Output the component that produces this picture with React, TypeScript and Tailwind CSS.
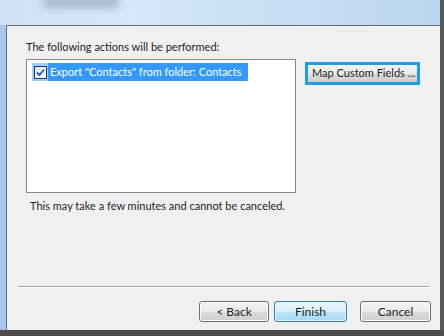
import React from "react";

const font = { fontFamily: 'Lato, "Noto Sans", sans-serif' };

const grayBtn =
  "h-[21px] rounded-[3px] border border-[#707070] bg-[linear-gradient(to_bottom,#f2f2f2_0%,#ebebeb_50%,#dddddd_51%,#cfcfcf_100%)] shadow-[inset_0_0_0_1px_#fbfbfb] flex items-center justify-center";

function CheckBox() {
  return (
    <div className="w-[13px] h-[13px] border border-[#1c3d66] bg-[linear-gradient(135deg,#dce4ee,#ffffff)] flex items-center justify-center">
      <svg width="9" height="9" viewBox="0 0 9 9">
        <path d="M1 4.5 L3.5 7 L8 1.5" fill="none" stroke="#21559a" strokeWidth="1.8" />
      </svg>
    </div>
  );
}

export default function App() {
  return (
    <div className="w-[444px] h-[336px] overflow-hidden flex flex-col bg-[#4d4d4d]" style={font}>
      <div className="h-[25px] flex shrink-0">
        <div className="flex-1 relative overflow-hidden bg-[linear-gradient(to_right,#cfe2f6_0%,#d6e7f8_30%,#c9dff4_60%,#bcd6f0_100%)]">
          <div className="ml-[42px] mt-[-4px] w-[78px] h-[12px] rounded-full bg-[#9aabbd] blur-[4px] opacity-80" />
        </div>
        <div className="w-[4px] bg-[#55585c]" />
      </div>

      <div className="flex flex-1">
        <div className="w-[6px] bg-[#a9c9ec]" />
        <div className="flex-1 border-l border-t border-[#5f6d7c] bg-[#f0f0f0] flex flex-col text-[11px] text-[#1e1e1e]">
          <div className="pl-[19px] pt-[13px] leading-[16px]">The following actions will be performed:</div>

          <div className="flex mt-[4px] pl-[19px]">
            <div className="w-[270px] h-[134px] bg-white border border-[#828790] pt-[3px] pl-[5px]">
              <div className="flex h-[18px] w-[216px]">
                <div className="w-[16px] bg-[#9fcbf6] flex items-center justify-center">
                  <CheckBox />
                </div>
                <div className="flex-1 bg-[#3399ff] text-white leading-[18px] pl-[2px] whitespace-nowrap">
                  Export "Contacts" from folder: Contacts
                </div>
              </div>
            </div>

            <div className="ml-[9px] mt-[3px] w-[115px] h-[23px] border-[3px] border-[#1ba1e2] bg-[linear-gradient(to_bottom,#f2f2f2_0%,#ebebeb_50%,#dddddd_51%,#cfcfcf_100%)] flex items-center pl-[4px] whitespace-nowrap">
              Map Custom Fields ...
            </div>
          </div>

          <div className="pl-[23px] pt-[5px] leading-[16px]">This may take a few minutes and cannot be canceled.</div>

          <div className="flex-1" />

          <div className="mx-[11px] border-t border-[#a0a0a0] border-b border-b-white" />

          <div className="flex justify-end gap-[5px] pr-[9px] mt-[13px] mb-[8px] text-[12px]">
            <div className={`w-[70px] ${grayBtn}`}>&lt; Back</div>
            <div className="w-[73px] h-[21px] rounded-[3px] border border-[#3c7fb1] bg-[linear-gradient(to_bottom,#eaf6fd_0%,#d9f0fc_50%,#bee6fd_51%,#a7d9f5_100%)] shadow-[inset_0_0_0_1px_#e3f3fc] flex items-center justify-center">
              Finish
            </div>
            <div className="w-[3px]" />
            <div className={`w-[71px] ${grayBtn}`}>Cancel</div>
          </div>
        </div>
        <div className="w-[4px] bg-[#55585c]" />
      </div>

      <div className="h-[6px] bg-[#4d4d4d]" />
    </div>
  );
}
